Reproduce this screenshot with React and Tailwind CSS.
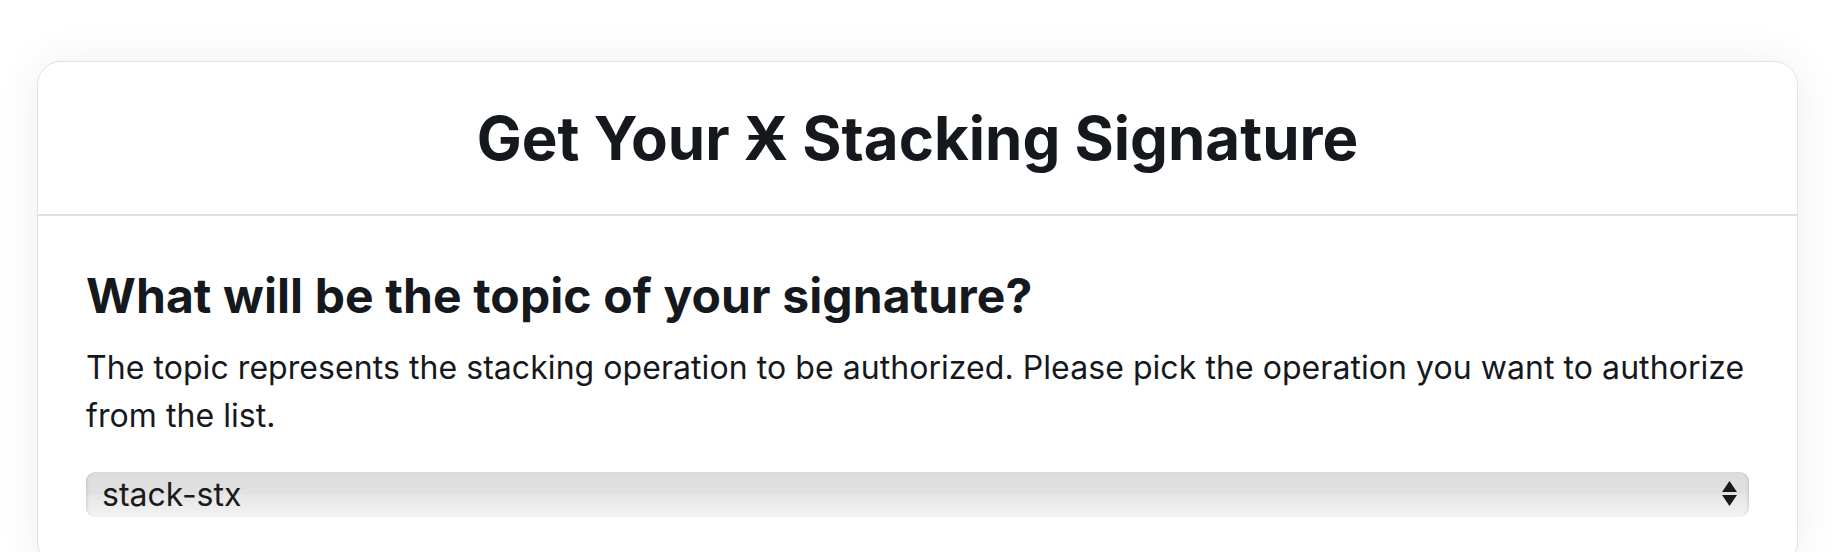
import React from "react";

export default function App() {
  return (
    <div
      className="h-[552px] overflow-hidden bg-white pt-[61px] pl-[37px] pr-[40px] text-[#15191e]"
      style={{ fontFamily: "Inter, 'Noto Sans', 'DejaVu Sans', sans-serif" }}
    >
      <div className="rounded-[24px] border border-[#e2e2e2] bg-white shadow-[0_0_44px_rgba(0,0,0,0.07)]">
        <div className="border-b-2 border-[#e0e0e0] px-12 py-10 text-center">
          <h1 className="text-[60px] font-bold leading-[72px] tracking-[0px]">
            Get Your Ӿ Stacking Signature
          </h1>
        </div>
        <div className="px-12 pt-12 pb-12">
          <h2 className="text-[48px] font-bold leading-[64px] tracking-[0.1px]">
            What will be the topic of your signature?
          </h2>
          <p className="mt-4 text-[32px] leading-[48px] tracking-[0.06px]">
            The topic represents the stacking operation to be authorized. Please pick the operation you want to authorize from the list.
          </p>
          <div className="relative mt-8 h-[45px] overflow-hidden rounded-[9px] bg-[linear-gradient(to_bottom,#dcdcdc_0%,#e1e1e1_48%,#e6e6e6_52%,#f3f3f3_100%)] shadow-[inset_3px_0_3px_-2px_rgba(0,0,0,0.12),inset_-3px_0_3px_-2px_rgba(0,0,0,0.12)]">
            <div className="flex h-full items-center pl-[16px] text-[32px] leading-none text-[#1a1a1a]">
              stack-stx
            </div>
            <div className="absolute right-[12px] top-[9px] flex flex-col items-center gap-[3px]">
              <svg width="15" height="11" viewBox="0 0 15 11">
                <path d="M7.5 0 L15 11 L0 11 Z" fill="#1a1a1a" />
              </svg>
              <svg width="15" height="11" viewBox="0 0 15 11">
                <path d="M0 0 L15 0 L7.5 11 Z" fill="#1a1a1a" />
              </svg>
            </div>
          </div>
        </div>
      </div>
    </div>
  );
}
